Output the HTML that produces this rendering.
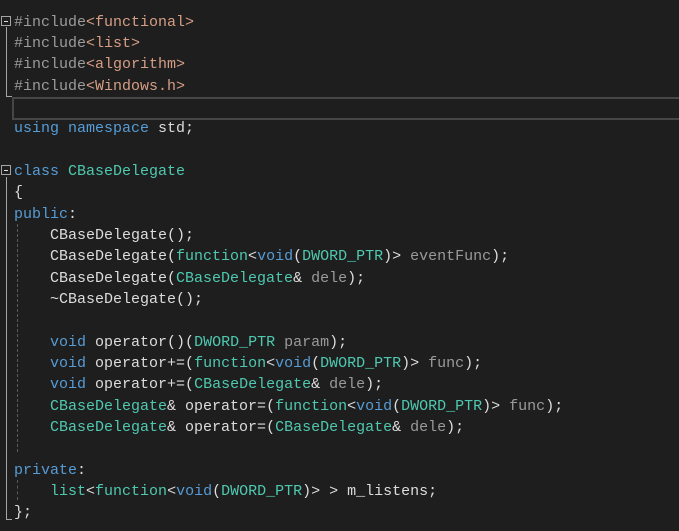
<!DOCTYPE html>
<html><head><meta charset="utf-8"><style>
html,body{margin:0;padding:0;background:#1e1e1e;width:679px;height:531px;overflow:hidden}
.l{position:absolute;left:14px;height:21px;line-height:21px;font-family:"Liberation Mono",monospace;font-size:15px;white-space:pre;color:#dcdcdc;margin-top:1px}
.p{color:#9b9b9b}.s{color:#d69d85}.k{color:#569cd6}.t{color:#4ec9b0}.g{color:#9a9a9a}
.box{position:absolute;width:8px;height:8px;border:1px solid #a5a5a5;background:#1e1e1e}
.box:after{content:"";position:absolute;left:2px;top:3.5px;width:4px;height:1px;background:#dcdcdc}
.v{position:absolute;width:1px;background:#a5a5a5}
.h{position:absolute;height:1px;background:#a5a5a5}
.d{position:absolute;left:17px;width:0;border-left:1px dashed #5a5a5a}
</style></head><body>
<div style="position:absolute;left:12px;top:97px;width:680px;height:19px;border:2px solid #464646;border-right:none"></div>
<div class="v" style="left:6px;top:27px;height:70px"></div><div class="h" style="left:6px;top:96px;width:6px"></div>
<div class="box" style="left:1px;top:16px"></div>
<div class="v" style="left:6px;top:177px;height:343px"></div><div class="h" style="left:6px;top:519px;width:6px"></div>
<div class="box" style="left:1px;top:165px"></div>
<div class="d" style="top:224px;height:228px"></div>
<div class="d" style="top:480px;height:20px"></div>
<div class="l" style="top:11px"><span class="p">#include</span><span class="s">&lt;functional&gt;</span></div>
<div class="l" style="top:32px"><span class="p">#include</span><span class="s">&lt;list&gt;</span></div>
<div class="l" style="top:53px"><span class="p">#include</span><span class="s">&lt;algorithm&gt;</span></div>
<div class="l" style="top:75px"><span class="p">#include</span><span class="s">&lt;Windows.h&gt;</span></div>
<div class="l" style="top:117px"><span class="k">using namespace</span> std;</div>
<div class="l" style="top:160px"><span class="k">class</span> <span class="t">CBaseDelegate</span></div>
<div class="l" style="top:181px">{</div>
<div class="l" style="top:203px"><span class="k">public</span>:</div>
<div class="l" style="top:224px">    CBaseDelegate();</div>
<div class="l" style="top:245px">    CBaseDelegate(<span class="t">function</span>&lt;<span class="k">void</span>(<span class="t">DWORD_PTR</span>)&gt; <span class="g">eventFunc</span>);</div>
<div class="l" style="top:267px">    CBaseDelegate(<span class="t">CBaseDelegate</span>&amp; <span class="g">dele</span>);</div>
<div class="l" style="top:288px">    ~CBaseDelegate();</div>
<div class="l" style="top:331px">    <span class="k">void</span> operator()(<span class="t">DWORD_PTR</span> <span class="g">param</span>);</div>
<div class="l" style="top:352px">    <span class="k">void</span> operator+=(<span class="t">function</span>&lt;<span class="k">void</span>(<span class="t">DWORD_PTR</span>)&gt; <span class="g">func</span>);</div>
<div class="l" style="top:373px">    <span class="k">void</span> operator+=(<span class="t">CBaseDelegate</span>&amp; <span class="g">dele</span>);</div>
<div class="l" style="top:395px">    <span class="t">CBaseDelegate</span>&amp; operator=(<span class="t">function</span>&lt;<span class="k">void</span>(<span class="t">DWORD_PTR</span>)&gt; <span class="g">func</span>);</div>
<div class="l" style="top:416px">    <span class="t">CBaseDelegate</span>&amp; operator=(<span class="t">CBaseDelegate</span>&amp; <span class="g">dele</span>);</div>
<div class="l" style="top:459px"><span class="k">private</span>:</div>
<div class="l" style="top:480px">    <span class="t">list</span>&lt;<span class="t">function</span>&lt;<span class="k">void</span>(<span class="t">DWORD_PTR</span>)&gt; &gt; m_listens;</div>
<div class="l" style="top:501px">};</div>
</body></html>
